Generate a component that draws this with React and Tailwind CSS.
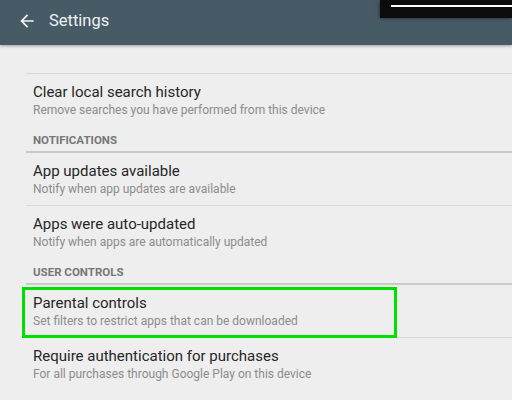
import React from "react";

const font = { fontFamily: "Roboto, 'Noto Sans', sans-serif" };

function Row({ title, subtitle, highlight }) {
  return (
    <div className="relative pl-[7px] pt-2 pb-2">
      <div className="text-[15px] leading-[20px] text-[#262626]">{title}</div>
      <div className="text-[12px] leading-[16px] text-[#8c8c8c]">{subtitle}</div>
      {highlight && (
        <div className="pointer-events-none absolute left-[-4px] top-[2px] h-[51px] w-[375px] border-[3px] border-[#00e000]" />
      )}
    </div>
  );
}

function Section({ label }) {
  return (
    <div className="pl-[7px] pt-[7px] pb-[4px] text-[11.5px] font-bold leading-[14px] text-[#777777]">
      {label}
    </div>
  );
}

export default function App() {
  return (
    <div className="h-[400px] w-[512px] overflow-hidden bg-[#eeeeee]" style={font}>
      {/* app bar */}
      <div className="relative z-10 flex h-[45px] items-center bg-[#475b67] shadow-[0_1px_3px_rgba(0,0,0,0.35)]">
        <svg
          className="ml-[17px] mb-[3px]"
          width="20"
          height="20"
          viewBox="0 0 24 24"
          fill="#f2f2f2"
        >
          <path d="M20 11H7.83l5.59-5.59L12 4l-8 8 8 8 1.41-1.41L7.83 13H20v-2z" />
        </svg>
        <span className="ml-[12px] mb-[3px] text-[16.5px] text-[#eef1f3]">Settings</span>
        {/* overlapping dark panel in the corner */}
        <div className="absolute right-0 top-0 h-[18px] w-[132px] bg-[#0c0c0c] pl-[11px] pt-[5px] shadow-[0_0_4px_rgba(0,0,0,0.6)]">
          <div className="h-[2px] w-full bg-white" />
        </div>
      </div>

      {/* preference list */}
      <div className="ml-[26px] pt-[28px]">
        <div className="border-t border-[#dadada]">
          <Row
            title="Clear local search history"
            subtitle="Remove searches you have performed from this device"
          />
        </div>
        <Section label="NOTIFICATIONS" />
        <div className="border-t-2 border-[#c9c9c9]">
          <Row
            title="App updates available"
            subtitle="Notify when app updates are available"
          />
        </div>
        <div className="border-t border-[#dadada]">
          <Row
            title="Apps were auto-updated"
            subtitle="Notify when apps are automatically updated"
          />
        </div>
        <Section label="USER CONTROLS" />
        <div className="border-t-2 border-[#c9c9c9]">
          <Row
            title="Parental controls"
            subtitle="Set filters to restrict apps that can be downloaded"
            highlight
          />
        </div>
        <div className="border-t border-[#dadada]">
          <Row
            title="Require authentication for purchases"
            subtitle="For all purchases through Google Play on this device"
          />
        </div>
      </div>
    </div>
  );
}
